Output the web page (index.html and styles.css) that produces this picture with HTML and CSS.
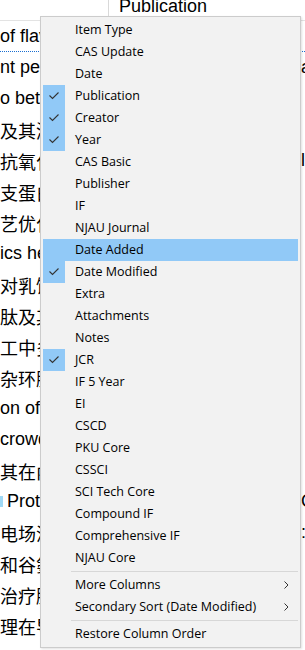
FILE: index.html
```html
<!DOCTYPE html>
<html lang="zh-cn">
<head>
  <meta charset="UTF-8" />
  <meta name="viewport" content="width=device-width, initial-scale=1.0"/>
  <title>Columns</title>
  <link rel="stylesheet" href="styles.css">
</head>
<body>

  <!-- item list behind the menu -->
  <div class="tabela">
    <div class="cabecalho">
      <div class="cab-col1"></div>
      <div class="cab-col2">Publication</div>
    </div>
    <div class="linha foco"><span class="c1">of flavonoids</span><span class="c2"></span><span class="c3"></span></div>
    <div class="linha"><span class="c1">nt peptides</span><span class="c2"></span><span class="c3">a</span></div>
    <div class="linha"><span class="c1">o between</span><span class="c2"></span><span class="c3"></span></div>
    <div class="linha"><span class="c1">及其测定</span><span class="c2"></span><span class="c3"></span></div>
    <div class="linha"><span class="c1">抗氧化活性</span><span class="c2"></span><span class="c3">l</span></div>
    <div class="linha"><span class="c1">支蛋白酶</span><span class="c2"></span><span class="c3"></span></div>
    <div class="linha"><span class="c1">艺优化研究</span><span class="c2"></span><span class="c3"></span></div>
    <div class="linha"><span class="c1">ics health</span><span class="c2"></span><span class="c3"></span></div>
    <div class="linha"><span class="c1">对乳饮料</span><span class="c2"></span><span class="c3"></span></div>
    <div class="linha"><span class="c1">肽及其功能</span><span class="c2"></span><span class="c3"></span></div>
    <div class="linha"><span class="c1">工中多酚</span><span class="c2"></span><span class="c3"></span></div>
    <div class="linha"><span class="c1">杂环胺形成</span><span class="c2"></span><span class="c3"></span></div>
    <div class="linha"><span class="c1">on of the</span><span class="c2"></span><span class="c3"></span></div>
    <div class="linha"><span class="c1">crowding</span><span class="c2"></span><span class="c3"></span></div>
    <div class="linha"><span class="c1">其在內源</span><span class="c2"></span><span class="c3"></span></div>
    <div class="linha"><span class="c1"><i class="marca"></i>Protein</span><span class="c2"></span><span class="c3">C</span></div>
    <div class="linha"><span class="c1">电场消毒</span><span class="c2"></span><span class="c3">:</span></div>
    <div class="linha"><span class="c1">和谷氨酸</span><span class="c2"></span><span class="c3"></span></div>
    <div class="linha"><span class="c1">治疗脂肪</span><span class="c2"></span><span class="c3"></span></div>
    <div class="linha"><span class="c1">理在导致</span><span class="c2"></span><span class="c3"></span></div>
  </div>

  <!-- column picker menu -->
  <div class="menu">
    <div class="item">Item Type</div>
    <div class="item">CAS Update</div>
    <div class="item">Date</div>
    <div class="item marcado">Publication</div>
    <div class="item marcado">Creator</div>
    <div class="item marcado">Year</div>
    <div class="item">CAS Basic</div>
    <div class="item">Publisher</div>
    <div class="item">IF</div>
    <div class="item">NJAU Journal</div>
    <div class="item hover">Date Added</div>
    <div class="item marcado">Date Modified</div>
    <div class="item">Extra</div>
    <div class="item">Attachments</div>
    <div class="item">Notes</div>
    <div class="item marcado">JCR</div>
    <div class="item">IF 5 Year</div>
    <div class="item">EI</div>
    <div class="item">CSCD</div>
    <div class="item">PKU Core</div>
    <div class="item">CSSCI</div>
    <div class="item">SCI Tech Core</div>
    <div class="item">Compound IF</div>
    <div class="item">Comprehensive IF</div>
    <div class="item">NJAU Core</div>
    <div class="separador"></div>
    <div class="item sub">More Columns</div>
    <div class="item sub">Secondary Sort (Date Modified)</div>
    <div class="separador"></div>
    <div class="item">Restore Column Order</div>
  </div>

</body>
</html>
```

FILE: styles.css
```css
body {
  margin: 0;
  background: #fff;
  font-family: "Liberation Sans", "Noto Sans CJK SC", sans-serif;
  color: #000;
  overflow: hidden;
}

.tabela {
  width: 305px;
}

.cabecalho {
  display: flex;
  height: 20px;
  border-bottom: 1px solid #e3e3e3;
  overflow: hidden;
}

.cab-col1 {
  width: 108px;
  border-right: 1px solid #d9d9d9;
}

.cab-col2 {
  padding-left: 10px;
  font-size: 18px;
  line-height: 12px;
}

.linha {
  display: grid;
  grid-template-columns: 108px 191px 1fr;
  height: 31px;
  box-sizing: border-box;
  align-items: center;
  font-size: 18px;
  white-space: nowrap;
  overflow: hidden;
}

.linha.foco {
  border-bottom: 1px dotted #1a6fd1;
}

.c1, .c2, .c3 {
  overflow: hidden;
}

.c3 {
  padding-left: 2px;
}

.marca {
  display: inline-block;
  width: 3px;
  height: 11px;
  background: #9fd8f5;
  margin-right: 4px;
}

/* menu */
.menu {
  position: absolute;
  left: 40px;
  top: 16px;
  width: 261px;
  box-sizing: border-box;
  padding: 2px;
  background: #f2f2f2;
  border: 1px solid #cccccc;
  box-shadow: 1px 1px 2px rgba(0,0,0,0.12);
  font-family: "Open Sans", sans-serif;
  font-size: 12.5px;
  color: #000;
}

.item {
  position: relative;
  height: 22px;
  line-height: 22px;
  padding-left: 32px;
  white-space: nowrap;
}

.item.hover {
  background: #91c9f7;
}

.item.marcado::before {
  content: "";
  position: absolute;
  left: 0;
  top: 0;
  width: 22px;
  height: 22px;
  background: #91c9f7 url("data:image/svg+xml;utf8,<svg xmlns='http://www.w3.org/2000/svg' width='22' height='22'><polyline points='6.5,10.5 9.5,13.5 15.5,7.5' fill='none' stroke='%23333' stroke-width='1.1'/></svg>") no-repeat;
}

.item.sub::after {
  content: "";
  position: absolute;
  right: 9px;
  top: 7px;
  width: 5px;
  height: 8px;
  background: url("data:image/svg+xml;utf8,<svg xmlns='http://www.w3.org/2000/svg' width='5' height='8'><polyline points='0.5,0.5 4,4 0.5,7.5' fill='none' stroke='%23333' stroke-width='1'/></svg>") no-repeat;
}

.separador {
  height: 1px;
  margin: 2px 0 2px 28px;
  background: #d7d7d7;
}
```
